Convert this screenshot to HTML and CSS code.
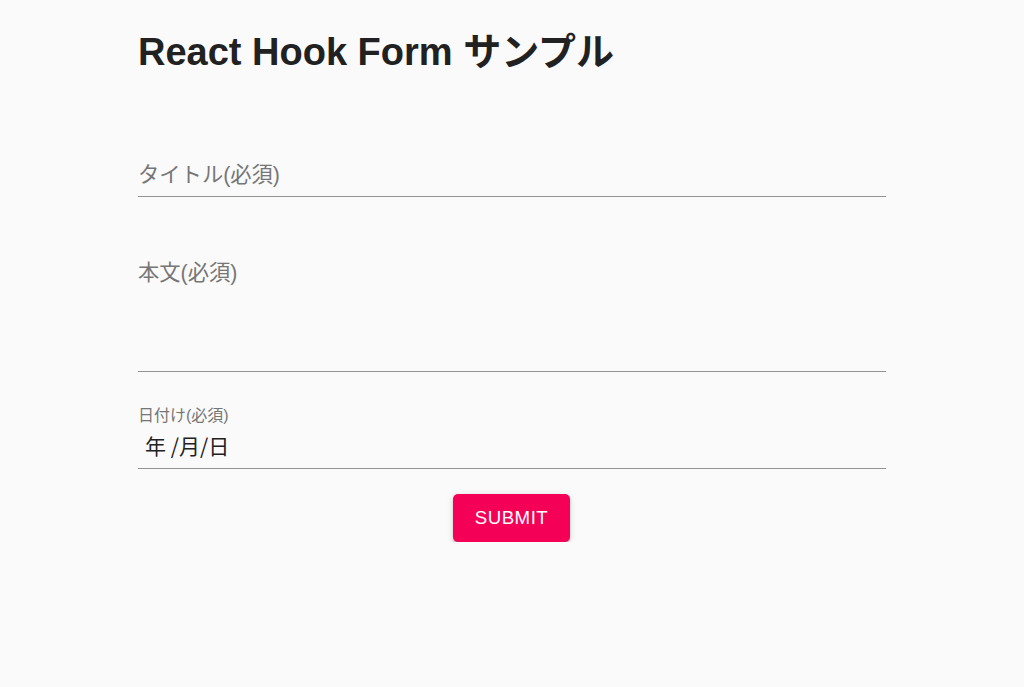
FILE: index.html
```html
<!DOCTYPE html>
<html lang="ja">
<head>
<meta charset="utf-8" />
<title>React Hook Form サンプル</title>
<link rel="stylesheet" href="styles.css">
</head>
<body>

<div id="main">
<h1 class="title">React Hook Form サンプル</h1>

<form class="form" onsubmit="return false;">
  <div class="field field-title">
    <label class="label">タイトル(必須)</label>
  </div>

  <div class="field field-body">
    <label class="label">本文(必須)</label>
    <div class="area"></div>
  </div>

  <div class="field field-date">
    <label class="label label-small">日付け(必須)</label>
    <div class="value">年 /月/日</div>
  </div>

  <div class="actions">
    <button type="submit" class="submit">SUBMIT</button>
  </div>
</form>
</div>

</body>
</html>
```

FILE: styles.css
```css
body, html{
  margin:0;
  padding:0;
  background:#fafafa;
  color:rgba(0,0,0,0.87);
  font-family:"Liberation Sans", "Noto Sans CJK JP", sans-serif;
}
#main{
  width:748px;
  margin:0 auto;
  padding-top:30px;
}
.title{
  margin:0;
  font-family:"Liberation Sans", "Noto Sans CJK JP", sans-serif;
  font-weight:bold;
  font-size:38px;
  line-height:44px;
  color:#212121;
}
.form{
  display:flex;
  flex-direction:column;
}
.field{
  border-bottom:1px solid #939393;
}
.label{
  display:block;
  font-size:21.3px;
  line-height:24px;
  color:#767676;
}
.field-title{
  margin-top:89px;
  padding-bottom:9px;
}
.field-body{
  margin-top:64px;
}
.area{
  height:86px;
}
.field-date{
  margin-top:36px;
  padding-bottom:11px;
}
.label-small{
  font-size:16px;
  line-height:16px;
}
.value{
  margin-top:9px;
  padding-left:7px;
  font-family:"Noto Sans CJK JP", sans-serif;
  font-size:21px;
  line-height:24px;
  color:#222;
}
.actions{
  display:flex;
  justify-content:center;
  margin-top:25px;
}
.submit{
  width:117px;
  height:48px;
  margin-right:1px;
  border:0;
  border-radius:5px;
  background:#f50057;
  color:#fff;
  font-family:"Liberation Sans", sans-serif;
  font-size:18.7px;
  font-weight:normal;
  letter-spacing:0.5px;
  box-shadow:0 4px 2px -2px rgba(0,0,0,0.2), 0 3px 3px 0 rgba(0,0,0,0.14), 0 1px 7px 0 rgba(0,0,0,0.12);
  cursor:pointer;
}
```
